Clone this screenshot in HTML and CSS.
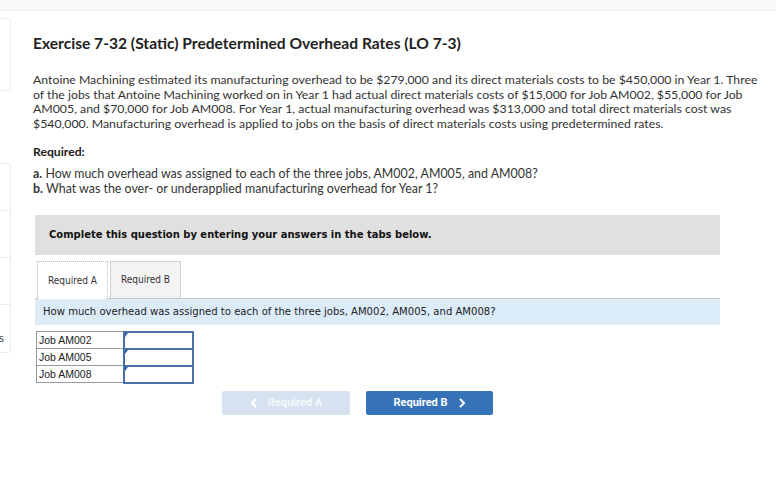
FILE: index.html
```html
<!DOCTYPE html>
<html>
<head>
<meta charset="utf-8">
<link rel="stylesheet" href="styles.css">
</head>
<body>
<div class="topbar"></div>
<div class="layout">
  <aside class="sidebar">
    <div class="card card-top"></div>
    <div class="card card-list">
      <div class="cell"></div>
      <div class="cell"></div>
      <div class="cell"></div>
      <div class="cell cell-last"><span class="clip">s</span></div>
    </div>
  </aside>
  <main class="main">
    <h1 class="title">Exercise 7-32 (Static) Predetermined Overhead Rates (LO 7-3)</h1>
    <p class="para">Antoine Machining estimated its manufacturing overhead to be $279,000 and its direct materials costs to be $450,000 in Year 1. Three<br>of the jobs that Antoine Machining worked on in Year 1 had actual direct materials costs of $15,000 for Job AM002, $55,000 for Job<br>AM005, and $70,000 for Job AM008. For Year 1, actual manufacturing overhead was $313,000 and total direct materials cost was<br>$540,000. Manufacturing overhead is applied to jobs on the basis of direct materials costs using predetermined rates.</p>
    <p class="req">Required:</p>
    <p class="items"><b>a.</b> How much overhead was assigned to each of the three jobs, AM002, AM005, and AM008?<br><b>b.</b> What was the over- or underapplied manufacturing overhead for Year 1?</p>
    <div class="notice">Complete this question by entering your answers in the tabs below.</div>
    <div class="tabs">
      <div class="tab tab-active">Required A</div>
      <div class="tab">Required B</div>
    </div>
    <div class="prompt">How much overhead was assigned to each of the three jobs, AM002, AM005, and AM008?</div>
    <table class="grid">
      <tr><td class="lbl">Job AM002</td><td class="inp"><span class="mark"></span></td></tr>
      <tr><td class="lbl">Job AM005</td><td class="inp"><span class="mark"></span></td></tr>
      <tr><td class="lbl">Job AM008</td><td class="inp"><span class="mark"></span></td></tr>
    </table>
    <div class="nav">
      <div class="btn btn-off"><svg class="chev" width="8" height="10" viewBox="0 0 8 10"><path d="M6 1 L2 5 L6 9" fill="none" stroke="#fff" stroke-width="2"/></svg>Required A</div>
      <div class="btn btn-on">Required B<svg class="chev" width="8" height="10" viewBox="0 0 8 10"><path d="M2 1 L6 5 L2 9" fill="none" stroke="#fff" stroke-width="2"/></svg></div>
    </div>
  </main>
</div>
</body>
</html>
```
FILE: styles.css
```css
html, body { margin: 0; padding: 0; background: #fff; }
body { font-family: Lato, "Open Sans", sans-serif; color: #333; }
.topbar { height: 10px; background: #fafafa; border-bottom: 1px solid #ececec; }
.layout { display: flex; }
.sidebar { width: 11px; flex: none; display: flex; flex-direction: column; }
.card { border: 1px solid #ebebeb; border-left: none; border-radius: 0 4px 4px 0; }
.card-top { margin-top: 7px; height: 71px; }
.card-list { margin-top: 72px; display: flex; flex-direction: column; }
.cell { height: 46px; border-bottom: 1px solid #ebebeb; }
.cell-last { border-bottom: none; height: 47px; box-sizing: border-box; padding-bottom: 7px; display: flex; align-items: flex-end; justify-content: flex-end; overflow: hidden; }
.clip { font-size: 12px; line-height: 14px; color: #444; margin-right: 6px; }
.main { padding-left: 22px; flex: 1; }
.title { margin: 22px 0 0; font-size: 15.6px; font-weight: 700; color: #222; line-height: 20px; }
.para { margin: 20px 0 0; font-size: 12.3px; line-height: 14.7px; white-space: nowrap; color: #333; }
.req { margin: 12px 0 0; font-size: 12.2px; font-weight: 700; line-height: 15px; color: #222; }
.items { margin: 7px 0 0; font-size: 12.4px; line-height: 15px; color: #333; }
.notice { margin: 19px 0 0 2px; width: 685px; height: 40px; background: #e0e0e0; box-sizing: border-box; padding: 0 14px; display: flex; align-items: center; font-family: "DejaVu Sans Condensed", sans-serif; font-weight: 700; font-size: 11.1px; color: #111; }
.tabs { display: flex; margin: 6px 0 0 4px; gap: 2px; height: 37px; }
.tab { width: 71px; box-sizing: border-box; border: 1px solid #cfcfcf; border-bottom: none; background: #f3f3f3; display: flex; align-items: center; justify-content: center; font-family: "DejaVu Sans Condensed", sans-serif; font-size: 10px; color: #333; }
.tab-active { background: #fff; border-color: #b8b8b8; border-style: dotted; border-bottom: none; height: 38px; position: relative; z-index: 1; }
.prompt { margin-left: 2px; width: 685px; height: 27px; box-sizing: border-box; border-top: 1px solid #c8c8c8; background: #dcebf8; padding-left: 8px; display: flex; align-items: center; font-family: "DejaVu Sans Condensed", sans-serif; font-size: 11.2px; color: #222; }
.grid { margin: 6px 0 0 3px; border-collapse: collapse; }
.grid td { height: 17px; padding: 0; box-sizing: border-box; }
.lbl { width: 87px; border: 1px solid #9a9a9a; font-family: "Liberation Sans", Arial, sans-serif; font-size: 10.5px; color: #222; padding-left: 2px !important; }
.inp { width: 69px; border: 2px solid #4a6fa5; position: relative; }
.mark { position: absolute; left: 0; top: 0; width: 0; height: 0; border-top: 4px solid #2a5fb0; border-right: 3px solid transparent; }
.nav { display: flex; gap: 16px; margin: 7px 0 0 189px; }
.btn { width: 128px; height: 24px; border-radius: 2px; display: flex; align-items: center; justify-content: center; gap: 10px; font-family: Roboto, sans-serif; font-weight: 700; font-size: 11px; color: #fff; }
.btn-off { background: #d6e2f0; color: #f4f7fb; }
.btn-on { background: #3572b8; width: 127px; }
.chev { display: block; }
```
